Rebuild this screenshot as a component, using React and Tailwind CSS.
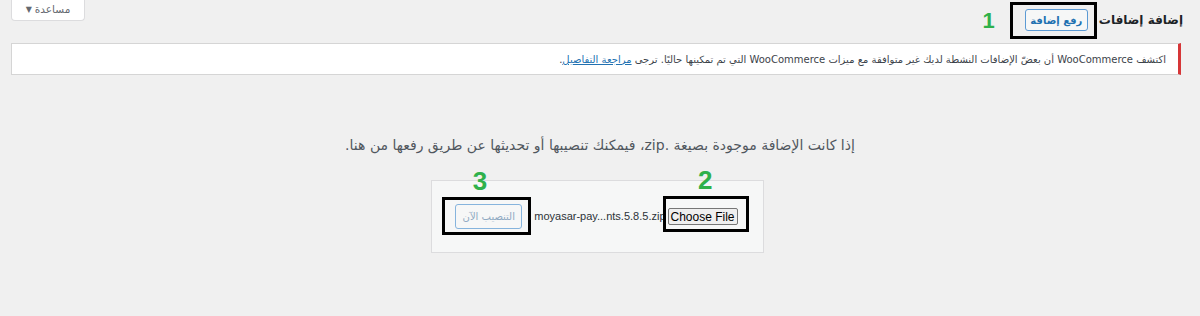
import React from 'react';

const Marker = ({ n, className }) => (
  <span
    className={`absolute font-['Liberation_Sans',sans-serif] font-bold text-[#2fb14b] leading-none ${className}`}
  >
    {n}
  </span>
);

export default function App() {
  return (
    <div
      dir="rtl"
      className="relative w-[1200px] h-[316px] overflow-hidden bg-[#f0f0f0] font-['DejaVu_Sans',sans-serif] text-[#3c434a]"
    >
      {/* header row */}
      <div className="flex items-start justify-between pr-[17px] pl-[11px] h-[43px]">
        <div className="flex items-center h-[43px] pb-[3px] whitespace-nowrap">
          <h1 className="text-[12px] font-bold text-[#1d2327] tracking-[-0.3px]">إضافة إضافات</h1>
          <div className="mr-[2px] flex items-center border-[3px] border-black h-[37px] pr-[6px] pl-[12px]">
            <button className="h-[22px] w-[63px] rounded-[3px] border border-[#5b9ad4] bg-[#f6f7f7] text-[#2271b1] text-[10px] font-bold">
              رفع إضافة
            </button>
          </div>
          <span className="mr-[15px] mt-[2px] font-['Liberation_Sans',sans-serif] font-bold text-[22px] leading-none text-[#2fb14b]">
            1
          </span>
        </div>
        <button className="h-[21px] w-[74px] bg-white border border-t-0 border-[#dcdcde] rounded-b-[4px] text-[10.5px] text-[#646970] flex items-center justify-center gap-[3px]">
          مساعدة <span className="text-[8px]">▼</span>
        </button>
      </div>

      {/* notice */}
      <div className="mr-[19px] ml-[11px] h-[32px] bg-white border border-[#d5d5d5] border-r-[3px] border-r-[#d63638] flex items-center pr-[12px] text-[10px] text-[#3c434a] whitespace-nowrap">
        <p>
          اكتشف WooCommerce أن بعضّ الإضافات النشطة لديك غير متوافقة مع ميزات WooCommerce التي تم تمكينها حاليًا. ترجى{' '}
          <a href="#" className="text-[#2271b1] underline">مراجعة التفاصيل</a>.
        </p>
      </div>

      {/* upload description */}
      <p className="mt-[60px] text-center text-[14px] text-[#50575e] whitespace-nowrap">
        إذا كانت الإضافة موجودة بصيغة .zip، فيمكنك تنصيبها أو تحديثها عن طريق رفعها من هنا.
      </p>

      {/* upload box */}
      <div className="relative mt-[24px] mx-auto w-[333px] h-[73px] bg-[#f6f7f7] border border-[#dcdcde] flex items-center pr-[25px] pl-[23px] -translate-x-[3px] whitespace-nowrap">
        <div className="relative shrink-0 flex items-center">
          <span
            dir="ltr"
            className="h-[17px] w-[70px] bg-[#efefef] border border-[#767676] rounded-[2px] text-[12px] text-black font-['Liberation_Sans',sans-serif] flex items-center justify-center"
          >
            Choose File
          </span>
          <div className="absolute -top-[12px] -right-[11px] w-[86px] h-[36px] border-[3px] border-black" />
          <Marker n="2" className="text-[26px] -top-[41px] right-[25px]" />
        </div>
        <span dir="ltr" className="shrink-0 mr-[2px] text-[11px] text-[#2c3338] font-['Liberation_Sans',sans-serif]">
          moyasar-pay...nts.5.8.5.zip
        </span>
        <div className="relative shrink-0 mr-[12px] flex items-center">
          <button className="h-[25px] w-[67px] rounded-[3px] border border-[#86b4dd] bg-[#f6f7f7] text-[10px] text-[#8fa9c2]">
            التنصيب الآن
          </button>
          <div className="absolute -top-[7px] -right-[9px] w-[89px] h-[38px] border-[3px] border-black" />
          <Marker n="3" className="text-[26px] -top-[36px] right-[35px]" />
        </div>
      </div>
    </div>
  );
}
